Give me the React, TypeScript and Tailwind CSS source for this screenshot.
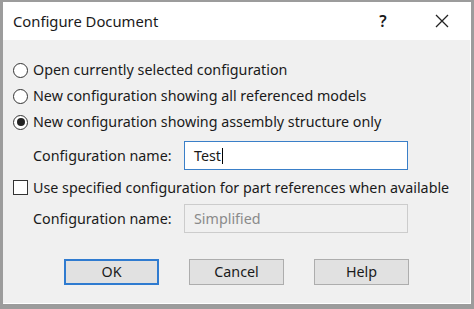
import React from "react";

const font = { fontFamily: '"Noto Sans", "Open Sans", sans-serif' };

function Radio({ checked }: { checked?: boolean }) {
  return (
    <span className="w-[15px] h-[15px] rounded-full border border-[#333] bg-white flex items-center justify-center shrink-0">
      {checked && <span className="w-[8px] h-[8px] rounded-full bg-[#222]" />}
    </span>
  );
}

export default function App() {
  return (
    <div className="w-[474px] h-[309px] bg-[#9c9c9c] pt-[2px] pl-[3px] overflow-hidden" style={font}>
      <div className="w-[468px] h-[302px] bg-[#f0f0f0] border-r border-b border-white flex flex-col text-[#1a1a1a]">
        <div className="h-[38px] bg-white flex items-center pl-[10px] shrink-0">
          <span className="text-[14.8px] flex-1">Configure Document</span>
          <span className="text-[16px] w-[20px] text-center mr-[42px] font-semibold">?</span>
          <svg width="14" height="14" viewBox="0 0 14 14" className="mr-[21px]">
            <path d="M1 1L13 13M13 1L1 13" stroke="#222" strokeWidth="1.3" />
          </svg>
        </div>
        <div className="flex flex-col pl-[10px] pt-[17px] text-[14.3px]">
          <div className="h-[26px] flex items-center gap-[5px]">
            <Radio />
            <span>Open currently selected configuration</span>
          </div>
          <div className="h-[26px] flex items-center gap-[5px]">
            <Radio />
            <span>New configuration showing all referenced models</span>
          </div>
          <div className="h-[26px] flex items-center gap-[5px]">
            <Radio checked />
            <span>New configuration showing assembly structure only</span>
          </div>
          <div className="flex items-center mt-[6px] h-[29px]">
            <span className="w-[171px] pl-[20px]">Configuration name:</span>
            <div className="w-[224px] h-[29px] bg-white border border-[#3a7fc8] flex items-center pl-[9px]">
              <span>Test</span>
              <span className="w-px h-[16px] bg-black ml-[1px]" />
            </div>
          </div>
          <div className="h-[17px] flex items-center gap-[5px] mt-[9px]">
            <span className="w-[15px] h-[15px] border border-[#333] bg-white shrink-0" />
            <span>Use specified configuration for part references when available</span>
          </div>
          <div className="flex items-center mt-[8px] h-[29px]">
            <span className="w-[171px] pl-[20px]">Configuration name:</span>
            <div className="w-[224px] h-[29px] bg-[#f0f0f0] border border-[#cccccc] flex items-center pl-[9px] text-[#8a8a8a]">
              <span>Simplified</span>
            </div>
          </div>
          <div className="flex mt-[26px] pl-[51px] gap-[30px]">
            <button className="w-[95px] h-[26px] bg-[#e1e1e1] border-2 border-[#2f7bd0] flex items-center justify-center">OK</button>
            <button className="w-[95px] h-[26px] bg-[#e1e1e1] border border-[#adadad] flex items-center justify-center">Cancel</button>
            <button className="w-[95px] h-[26px] bg-[#e1e1e1] border border-[#adadad] flex items-center justify-center">Help</button>
          </div>
        </div>
      </div>
    </div>
  );
}
